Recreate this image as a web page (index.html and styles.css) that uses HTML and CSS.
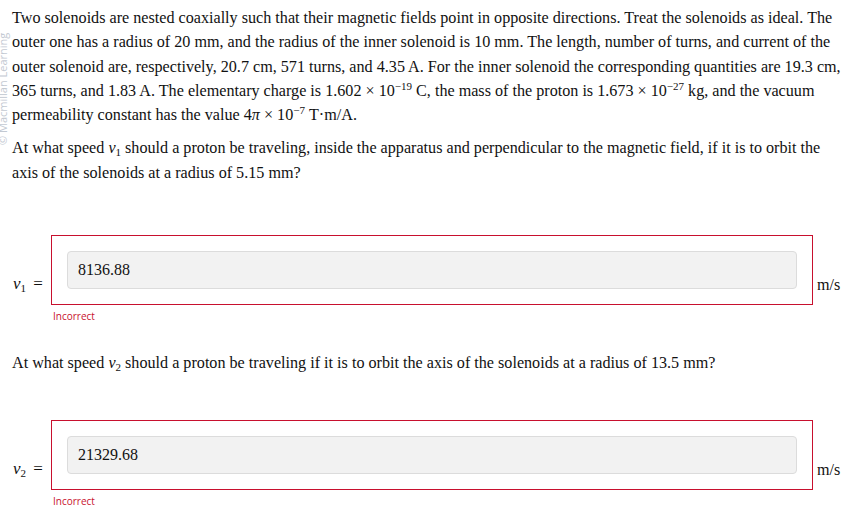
FILE: index.html
```html
<!DOCTYPE html>
<html>
<head>
<meta charset="utf-8">
<link rel="stylesheet" href="styles.css">
</head>
<body>
<div class="watermark">© Macmillan Learning</div>
<div class="page">
  <p class="p1">Two solenoids are nested coaxially such that their magnetic fields point in opposite directions. Treat the solenoids as ideal. The outer one has a radius of 20 mm, and the radius of the inner solenoid is 10 mm. The length, number of turns, and current of the outer solenoid are, respectively, 20.7 cm, 571 turns, and 4.35 A. For the inner solenoid the corresponding quantities are 19.3 cm, 365 turns, and 1.83 A. The elementary charge is 1.602 × 10<sup>−19</sup> C, the mass of the proton is 1.673 × 10<sup>−27</sup> kg, and the vacuum permeability constant has the value 4<i>π</i> × 10<sup>−7</sup> T·m/A.</p>
  <p class="p2">At what speed <i class="v">v</i><sub>1</sub> should a proton be traveling, inside the apparatus and perpendicular to the magnetic field, if it is to orbit the axis of the solenoids at a radius of 5.15 mm?</p>

  <div class="answer a1">
    <div class="label"><i class="v">v</i><sub>1</sub> <span class="eq">=</span></div>
    <div class="box"><div class="input">8136.88</div></div>
    <div class="unit">m/s</div>
  </div>
  <div class="status">Incorrect</div>

  <p class="p3">At what speed <i class="v">v</i><sub>2</sub> should a proton be traveling if it is to orbit the axis of the solenoids at a radius of 13.5 mm?</p>

  <div class="answer a2">
    <div class="label"><i class="v">v</i><sub>2</sub> <span class="eq">=</span></div>
    <div class="box"><div class="input">21329.68</div></div>
    <div class="unit">m/s</div>
  </div>
  <div class="status">Incorrect</div>
</div>
</body>
</html>
```
FILE: styles.css
```css
html, body {
  margin: 0;
  padding: 0;
  background: #ffffff;
}
body {
  font-family: "Liberation Serif", "Times New Roman", serif;
  font-size: 16.15px;
  color: #111111;
  overflow: hidden;
}
.watermark {
  position: absolute;
  left: -62px;
  top: 74px;
  width: 130px;
  transform: rotate(-90deg);
  font-family: "Open Sans", "Noto Sans", sans-serif;
  font-size: 11px;
  line-height: 12px;
  color: #c3c9d2;
  white-space: nowrap;
}
.page {
  padding: 6px 0 0 12px;
  width: 834px;
}
p {
  margin: 0;
  line-height: 24.3px;
}
sup, sub {
  font-size: 11px;
  line-height: 0;
}
sup { vertical-align: 6px; }
sub { vertical-align: -3px; }
.v {
  font-style: italic;
}
.p2 {
  margin-top: 9px;
}
.answer {
  display: flex;
  align-items: flex-end;
  margin-left: 1px;
}
.a1 { margin-top: 50px; }
.a2 { margin-top: 45px; }
.label {
  width: 38px;
  padding-bottom: 9px;
  line-height: 24px;
  font-size: 17px;
  white-space: nowrap;
}
.eq {
  margin-left: 3px;
}
.box {
  width: 730px;
  border: 1px solid #c8102e;
  padding: 15px 15px 15px 15px;
}
.input {
  height: 36px;
  background: #f2f2f2;
  border: 1px solid #dcdcdc;
  border-radius: 4px;
  padding: 0 10px;
  line-height: 36px;
  font-size: 16px;
}
.unit {
  padding-left: 4px;
  padding-bottom: 8px;
  line-height: 24px;
}
.status {
  margin: 4px 0 0 41px;
  font-family: "Open Sans", "Noto Sans", sans-serif;
  font-size: 10px;
  line-height: 14px;
  color: #c8102e;
}
.p3 {
  margin-top: 28px;
}
```
